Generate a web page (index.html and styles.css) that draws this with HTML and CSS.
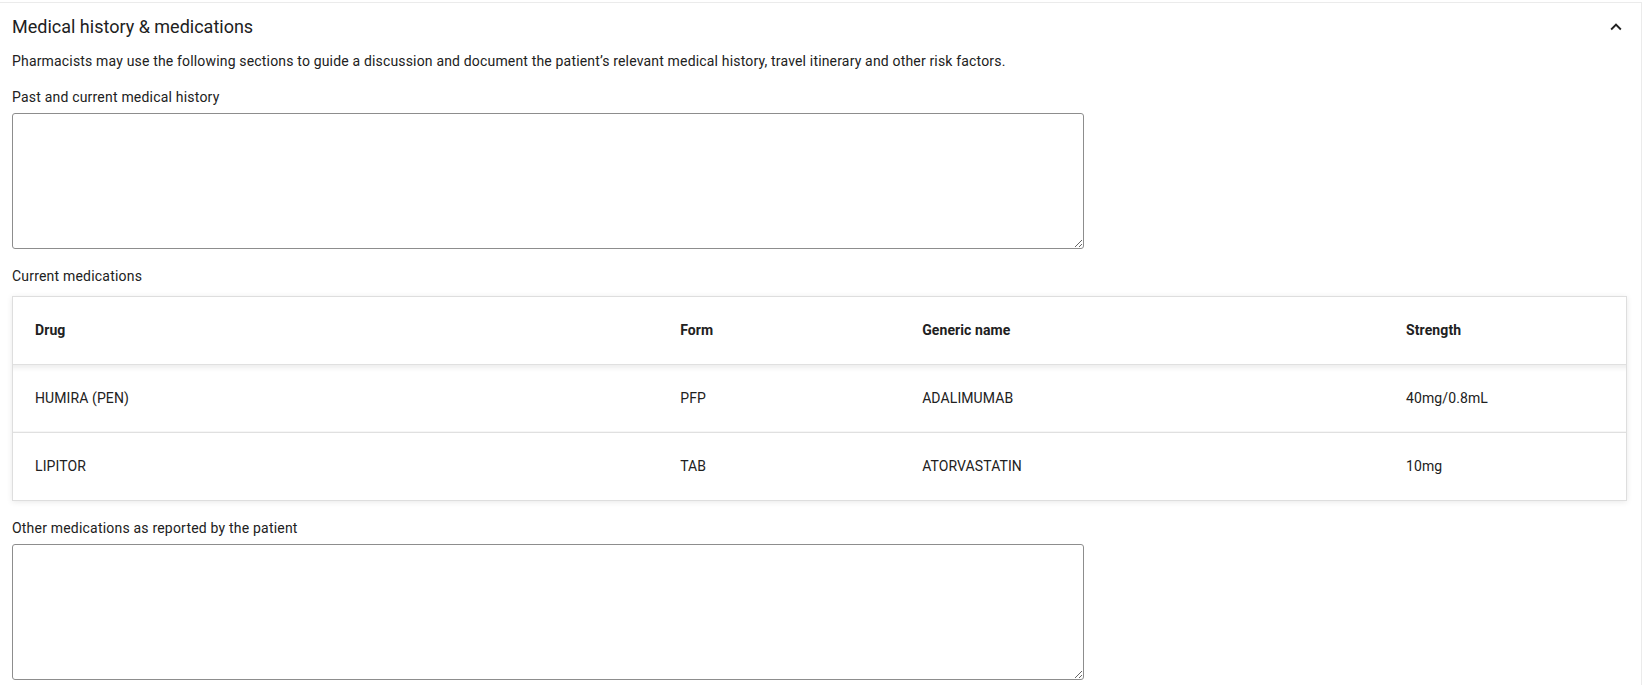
FILE: index.html
```html
<!DOCTYPE html>
<html>
	<head>
		<meta charset="utf-8" />
		<title>Medical history &amp; medications</title>
		<link rel="stylesheet" href="styles.css">
	</head>
	<body>
		<section class="panel">
			<header class="panel_head">
				<h2 class="panel_title">Medical history &amp; medications</h2>
				<button class="panel_toggle" type="button" aria-label="Collapse">
					<svg width="22" height="22" viewBox="0 0 24 24"><path d="M12 8l-6 6 1.41 1.41L12 10.83l4.59 4.58L18 14z" fill="#212121"/></svg>
				</button>
			</header>
			<div class="panel_body">
				<p class="intro">Pharmacists may use the following sections to guide a discussion and document the patient’s relevant medical history, travel itinerary and other risk factors.</p>

				<label class="field_label" for="history">Past and current medical history</label>
				<textarea class="notes" id="history"></textarea>

				<div class="field_label table_label">Current medications</div>
				<div class="med_wrap">
					<table class="med_table">
						<thead>
							<tr>
								<th class="col_drug">Drug</th>
								<th class="col_form">Form</th>
								<th class="col_generic">Generic name</th>
								<th class="col_strength">Strength</th>
							</tr>
						</thead>
						<tbody>
							<tr>
								<td>HUMIRA (PEN)</td>
								<td>PFP</td>
								<td>ADALIMUMAB</td>
								<td>40mg/0.8mL</td>
							</tr>
							<tr>
								<td>LIPITOR</td>
								<td>TAB</td>
								<td>ATORVASTATIN</td>
								<td>10mg</td>
							</tr>
						</tbody>
					</table>
				</div>

				<label class="field_label other_label" for="other">Other medications as reported by the patient</label>
				<textarea class="notes" id="other"></textarea>
			</div>
		</section>
	</body>
</html>
```

FILE: styles.css
```css
body {
	margin: 0;
	background-color: #fff;
	font-family: Roboto, "Liberation Sans", Arial, sans-serif;
	color: #212121;
}

.panel {
	margin-top: 2px;
	border-top: 1px solid #ebebeb;
	border-right: 1px solid #ebebeb;
	height: 700px;
}

.panel_head {
	display: flex;
	align-items: center;
	justify-content: space-between;
	padding: 12px 14px 0 12px;
}

.panel_title {
	margin: 0;
	font-size: 18px;
	font-weight: 400;
	line-height: 24px;
	color: #212121;
}

.panel_toggle {
	display: flex;
	width: 22px;
	height: 22px;
	padding: 0;
	border: none;
	background: none;
	cursor: pointer;
}

.panel_body {
	display: flex;
	flex-direction: column;
	align-items: flex-start;
	padding: 0 14px 0 12px;
	font-size: 14px;
	line-height: 20px;
}

.intro {
	margin: 12px 0 0 0;
	letter-spacing: 0.17px;
}

.field_label {
	margin-top: 16px;
	letter-spacing: 0.2px;
}

.table_label {
	margin-top: 17px;
}

.other_label {
	margin-top: 17px;
}

.notes {
	box-sizing: border-box;
	width: 1072px;
	height: 136px;
	margin-top: 6px;
	border: 1px solid #8d8d8d;
	border-radius: 3px;
	font-family: Roboto, "Liberation Sans", Arial, sans-serif;
	font-size: 14px;
	outline: none;
}

.med_wrap {
	align-self: stretch;
	margin-top: 10px;
	border: 1px solid #dedede;
	background-color: #fff;
	box-shadow: 0 1px 6px rgba(0, 0, 0, 0.09);
}

.med_table {
	width: 100%;
	border-collapse: collapse;
	table-layout: fixed;
}

.med_table th,
.med_table td {
	height: 68px;
	padding: 0 22px;
	text-align: left;
	vertical-align: middle;
	font-size: 14px;
	letter-spacing: 0.1px;
	box-sizing: border-box;
}

.med_table th {
	height: 67px;
	font-weight: 700;
	border-bottom: 1px solid #e0e0e0;
}

.med_table tbody tr td {
	border-bottom: 1px solid #e0e0e0;
}

/* shadow under the header row */
.med_table tbody tr:first-child td {
	background: linear-gradient(rgba(0, 0, 0, 0.07), rgba(0, 0, 0, 0) 7px);
}

.med_table tbody tr:last-child td {
	border-bottom: none;
}

.col_drug {
	width: 40%;
}

.col_form {
	width: 15%;
}

.col_generic {
	width: 30%;
}

.col_strength {
	width: 15%;
}
```
